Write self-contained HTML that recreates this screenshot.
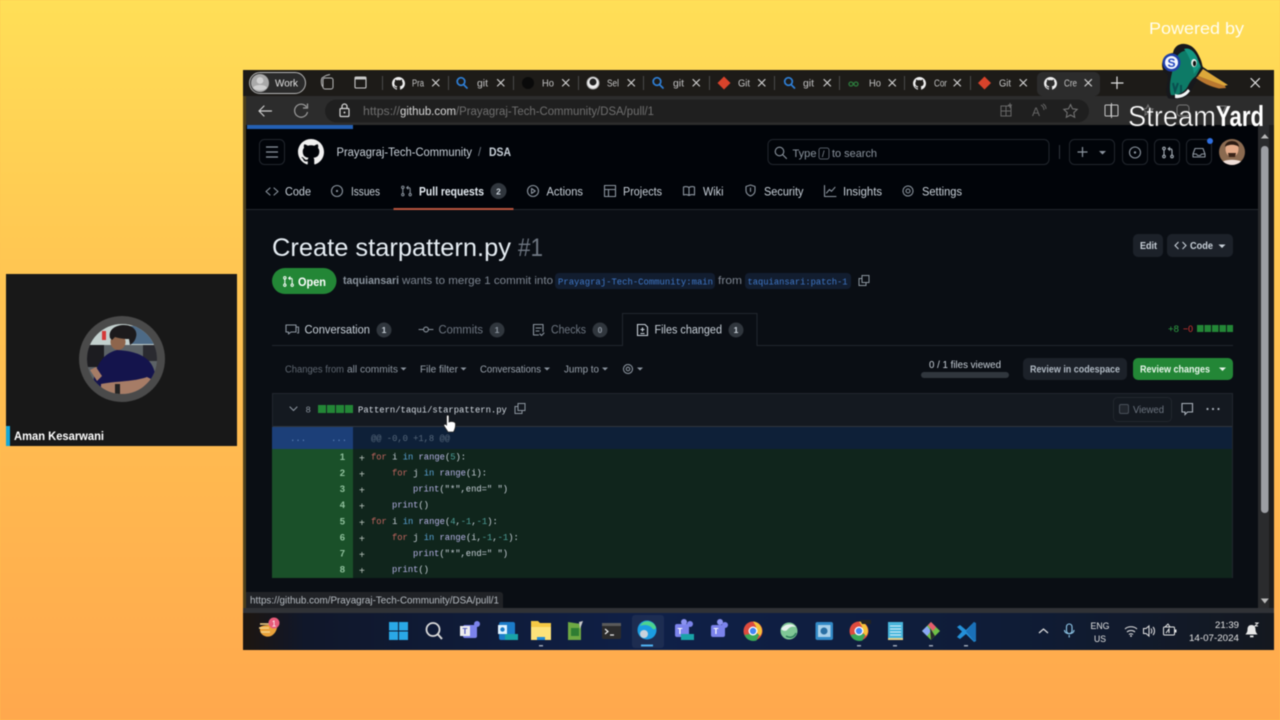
<!DOCTYPE html>
<html lang="en"><head><meta charset="utf-8"><title>Create starpattern.py</title>
<style>
html,body{margin:0;padding:0;width:1280px;height:720px;overflow:hidden;background:#ffc451}
svg{display:block;filter:blur(.55px)}
text{font-family:"Liberation Sans",sans-serif;white-space:pre}
.m{font-family:"Liberation Mono",monospace}
.n{fill:#c9d1d9;font-size:11.5px}
.i{fill:none;stroke:#8b949e;stroke-width:1.1;stroke-linecap:round;stroke-linejoin:round}
.c{font-family:"Liberation Mono",monospace;font-size:8.8px;fill:#c9d1d9}
.k{fill:#c2665f}.b{fill:#5ba3d6}.f{fill:#b7b3e6}.d{fill:#4f9f9a}
.l{font-size:9.5px;fill:#8fc09c;font-weight:bold;text-anchor:end;font-family:"Liberation Mono",monospace}
.p{font-size:10px;fill:#b9c4bd;font-family:"Liberation Mono",monospace}
.t{font-size:10px;fill:#c4c4c4}
.x{stroke:#cfcfcf;stroke-width:1.2;stroke-linecap:round}
.ct{font-size:8.5px;fill:#c9d1d9;text-anchor:middle;font-weight:bold}
</style></head><body>
<svg width="1280" height="720" viewBox="0 0 1280 720" xmlns="http://www.w3.org/2000/svg">
<defs>
<linearGradient id="bg" x1="0" y1="0" x2="0" y2="1"><stop offset="0" stop-color="#ffdf57"/><stop offset=".37" stop-color="#ffc652"/><stop offset="1" stop-color="#ffa84d"/></linearGradient>
<linearGradient id="tb" x1="0" y1="0" x2="1" y2="0"><stop offset="0" stop-color="#1d1610"/><stop offset=".06" stop-color="#10172a"/><stop offset=".4" stop-color="#0f2048"/><stop offset=".75" stop-color="#0f1c36"/><stop offset="1" stop-color="#14181f"/></linearGradient>
<symbol id="gh" viewBox="0 0 16 16"><path d="M8 0c4.42 0 8 3.58 8 8a8.013 8.013 0 0 1-5.45 7.59c-.4.08-.55-.17-.55-.38 0-.27.01-1.13.01-2.2 0-.75-.25-1.23-.54-1.48 1.78-.2 3.65-.88 3.65-3.95 0-.88-.31-1.59-.82-2.15.08-.2.36-1.02-.08-2.12 0 0-.67-.22-2.2.82-.64-.18-1.32-.27-2-.27-.68 0-1.36.09-2 .27-1.53-1.03-2.2-.82-2.2-.82-.44 1.1-.16 1.92-.08 2.12-.51.56-.82 1.28-.82 2.15 0 3.06 1.86 3.75 3.64 3.95-.23.2-.44.55-.51 1.07-.46.21-1.61.55-2.33-.66-.15-.24-.6-.83-1.23-.82-.67.01-.27.38.01.53.34.19.73.9.82 1.13.16.45.68 1.31 2.69.94 0 .67.01 1.3.01 1.49 0 .21-.15.45-.55.38A7.995 7.995 0 0 1 0 8c0-4.42 3.58-8 8-8Z" fill="#f0f0f0"/></symbol>
<symbol id="pr" viewBox="0 0 12 12" overflow="visible"><g fill="none" stroke="currentColor" stroke-width="1.1"><circle cx="2" cy="2" r="1.3"/><circle cx="2" cy="10" r="1.3"/><circle cx="10" cy="10" r="1.3"/><path d="M2 3.4v5.2M10 8.6V4c0-1-.6-1.6-1.6-1.6H6.5M8 .7 6.2 2.4 8 4.1"/></g></symbol>
<symbol id="copy" viewBox="0 0 12 12" overflow="visible"><g fill="none" stroke="#8b949e" stroke-width="1"><path d="M4 1h7v7H4z"/><path d="M4 4H1v7h7V8"/></g></symbol>
<clipPath id="ph"><circle cx="122" cy="359" r="35"/></clipPath>
<clipPath id="av"><circle cx="1232" cy="152" r="13"/></clipPath>
</defs>

<rect width="1280" height="720" fill="url(#bg)"/>
<text x="1149" y="34" font-size="17" fill="#fffdf0" textLength="95" lengthAdjust="spacingAndGlyphs">Powered by</text>

<!-- window -->
<rect x="243" y="70" width="1031" height="580" fill="#0d1117"/>
<rect x="243" y="70" width="1031" height="26" fill="#1d1b18"/>
<rect x="243" y="96" width="1031" height="29" fill="#2c2c2c"/>
<rect x="243" y="96" width="3" height="512" fill="#4c3f1b"/>
<rect x="246" y="125" width="1012" height="84" fill="#010409"/>
<rect x="246" y="209" width="1012" height="399" fill="#0a0e14"/>
<rect x="1037" y="72" width="63" height="24" rx="6" fill="#2c2c2c"/>

<!-- tab strip -->
<rect x="249.500" y="72.500" width="56" height="21" rx="10.500" fill="#2a2a2a" stroke="#b5b5b5"/>
<circle cx="260" cy="83" r="9" fill="#a9a9a9"/><circle cx="260" cy="80.500" r="3.400" fill="#d2d2d2"/><path d="M253 88c1-4 13-4 14 0-3 3-11 3-14 0z" fill="#cfcfcf"/>
<text x="275" y="86.500" font-size="10.500" fill="#e3e3e3" textLength="23" lengthAdjust="spacingAndGlyphs">Work</text>
<g fill="none" stroke="#b8b8b8" stroke-width="1"><rect x="323" y="78" width="10" height="11" rx="2"/><path d="M323 87c-2-2-2-7-1-9l4-2.500M326 75.500l4-1"/></g>
<rect x="355" y="77" width="11" height="11" rx="1" fill="none" stroke="#c8c8c8" stroke-width="1.100"/><rect x="355" y="77" width="11" height="2.500" fill="#c8c8c8"/>
<g stroke="#4a4a4a"><path d="M382.500 76v14M448.500 76v14M513.500 76v14M578.500 76v14M643.500 76v14M709.500 76v14M774.500 76v14M839.500 76v14M904.500 76v14M970.500 76v14"/></g>
<use href="#gh" x="392" y="77" width="13" height="13"/>
<use href="#gh" x="913" y="77" width="13" height="13"/>
<use href="#gh" x="1044" y="77" width="13" height="13"/>
<g fill="none" stroke="#2f7fd6" stroke-width="1.700" stroke-linecap="round"><circle cx="461" cy="81.500" r="3.800"/><path d="M463.500 84.500l3.500 3.500"/><circle cx="657" cy="81.500" r="3.800"/><path d="M659.500 84.500l3.500 3.500"/><circle cx="788.500" cy="81.500" r="3.800"/><path d="M791 84.500l3.500 3.500"/></g>
<circle cx="528" cy="83" r="6" fill="#0a0a0a"/>
<circle cx="593" cy="83" r="6" fill="#eee" stroke="#aaa"/><circle cx="593" cy="82" r="3.500" fill="#222"/>
<g fill="#d8432b"><path d="M724 76.500l6.500 6.500-6.500 6.500-6.500-6.500z"/><path d="M984.500 76.500l6.500 6.500-6.500 6.500-6.500-6.500z"/></g>
<g fill="none" stroke="#2c7a3c" stroke-width="1.300"><circle cx="851" cy="84" r="2"/><circle cx="856" cy="84" r="2"/></g>
<g class="t">
<text x="412" y="86.500" textLength="12" lengthAdjust="spacingAndGlyphs">Pra</text><text x="477" y="86.500" textLength="11" lengthAdjust="spacingAndGlyphs">git</text><text x="542" y="86.500" textLength="12" lengthAdjust="spacingAndGlyphs">Ho</text><text x="607" y="86.500" textLength="12" lengthAdjust="spacingAndGlyphs">Sel</text><text x="673" y="86.500" textLength="11" lengthAdjust="spacingAndGlyphs">git</text><text x="738" y="86.500" textLength="12" lengthAdjust="spacingAndGlyphs">Git</text><text x="803" y="86.500" textLength="11" lengthAdjust="spacingAndGlyphs">git</text><text x="869" y="86.500" textLength="12" lengthAdjust="spacingAndGlyphs">Ho</text><text x="934" y="86.500" textLength="13" lengthAdjust="spacingAndGlyphs">Cor</text><text x="999" y="86.500" textLength="12" lengthAdjust="spacingAndGlyphs">Git</text><text x="1064" y="86.500" textLength="13" lengthAdjust="spacingAndGlyphs">Cre</text>
</g>
<g class="x">
<path d="M432.500 79.500l6.500 6.500M439 79.500l-6.500 6.500M497.500 79.500l6.500 6.500M504 79.500l-6.500 6.500M562.500 79.500l6.500 6.500M569 79.500l-6.500 6.500M628 79.500l6.500 6.500M634.500 79.500l-6.500 6.500M693 79.500l6.500 6.500M699.500 79.500l-6.500 6.500M758.500 79.500l6.500 6.500M765 79.500l-6.500 6.500M824 79.500l6.500 6.500M830.500 79.500l-6.500 6.500M889 79.500l6.500 6.500M895.500 79.500l-6.500 6.500M954 79.500l6.500 6.500M960.500 79.500l-6.500 6.500M1020 79.500l6.500 6.500M1026.500 79.500l-6.500 6.500M1085 79.500l6.500 6.500M1091.500 79.500l-6.500 6.500"/>
<path d="M1117 77v11.500M1111.500 83H1123" stroke="#e0e0e0"/>
<path d="M1251 78.500l8.500 8.500M1259.500 78.500l-8.500 8.500" stroke="#e8e8e8"/>
</g>

<!-- address bar -->
<rect x="325" y="99.500" width="764" height="23" rx="11.500" fill="#1f1f1f"/>
<path d="M259 111h12.500M259 111l5-5M259 111l5 5" fill="none" stroke="#cdcdcd" stroke-width="1.200" stroke-linecap="round"/>
<path d="M306.500 107a6.500 6.500 0 1 0 1 5" fill="none" stroke="#9d9d9d" stroke-width="1.200"/><path d="M307.500 103.500v4.500h-4.500" fill="none" stroke="#9d9d9d" stroke-width="1.200"/>
<rect x="340" y="108.500" width="9" height="8" rx="1" fill="none" stroke="#d5d5d5" stroke-width="1.200"/><path d="M342 108.500v-2a2.500 2.500 0 0 1 5 0v2" fill="none" stroke="#d5d5d5" stroke-width="1.200"/><circle cx="344.500" cy="112.500" r="1" fill="#d5d5d5"/>
<text x="363" y="115" font-size="11.500" fill="#6f6f6f" textLength="37" lengthAdjust="spacingAndGlyphs">https://</text>
<text x="400" y="115" font-size="11.500" fill="#d9d9d9" textLength="56" lengthAdjust="spacingAndGlyphs">github.com</text>
<text x="456" y="115" font-size="11.500" fill="#6f6f6f" textLength="198" lengthAdjust="spacingAndGlyphs">/Prayagraj-Tech-Community/DSA/pull/1</text>
<g fill="none" stroke="#666" stroke-width="1"><path d="M1001 106h10v10h-10zM1006 106v10M1001 111h10M1010 103v5M1008 105h4"/></g>
<text x="1032" y="116" font-size="12" fill="#666">A</text><path d="M1041 105c2 1 3 3 3 5M1043 104c2 1 3 3 3 5" stroke="#666" fill="none"/>
<path d="M1070.500 104.500l2 4.300 4.700.6-3.400 3.200.9 4.700-4.200-2.300-4.200 2.300.9-4.700-3.400-3.200 4.700-.6z" fill="none" stroke="#777"/>
<path d="M1106 105h5v11h-5a1 1 0 0 1-1-1v-9a1 1 0 0 1 1-1zM1112 105h5a1 1 0 0 1 1 1v9a1 1 0 0 1-1 1h-5M1111.500 103v15" fill="none" stroke="#c5c5c5"/>
<g fill="none" stroke="#777"><path d="M1148 105l1.500 3.500 3.500.5-2.500 2.500.5 3.500-3-1.800-3 1.800.5-3.500-2.500-2.500 3.500-.5z"/><rect x="1177" y="105" width="12" height="11" rx="3"/><path d="M1218 106l8 0-4 8z"/></g>
<rect x="247" y="125" width="106" height="4" fill="#2460b3"/>

<!-- github header -->
<rect x="259.500" y="139.500" width="25" height="25" rx="5" fill="none" stroke="#21262d"/>
<path d="M266 147h12M266 152h12M266 157h12" stroke="#8b949e" stroke-width="1.200"/>
<use href="#gh" x="298" y="139" width="26" height="26"/>
<text x="336.500" y="156" class="n" textLength="135.500" lengthAdjust="spacingAndGlyphs">Prayagraj-Tech-Community</text>
<text x="478" y="156" font-size="11.500" fill="#6e7681">/</text>
<text x="489" y="156" font-size="11.500" font-weight="bold" fill="#c9d1d9" textLength="22" lengthAdjust="spacingAndGlyphs">DSA</text>
<rect x="768" y="139.500" width="281" height="25" rx="5" fill="none" stroke="#21262d"/>
<circle cx="779.500" cy="151.500" r="4.300" class="i"/><path d="M783 155l3.500 3.500" class="i"/>
<text x="792.500" y="157" font-size="11" fill="#8b949e" textLength="24" lengthAdjust="spacingAndGlyphs">Type</text>
<rect x="819" y="148" width="10" height="11" rx="2" fill="none" stroke="#6e7681" stroke-width=".8"/><text x="822" y="157" font-size="9" fill="#8b949e">/</text>
<text x="832" y="157" font-size="11" fill="#8b949e" textLength="45" lengthAdjust="spacingAndGlyphs">to search</text>
<path d="M1059.500 145v14" stroke="#30363d"/>
<g fill="none" stroke="#21262d"><rect x="1069.500" y="139.500" width="45" height="25" rx="5"/><rect x="1122.500" y="139.500" width="25" height="25" rx="5"/><rect x="1154.500" y="139.500" width="25" height="25" rx="5"/><rect x="1186.500" y="139.500" width="25" height="25" rx="5"/></g>
<path d="M1082.500 147v10M1077.500 152h10" stroke="#8b949e" stroke-width="1.200"/><path d="M1099 151h7l-3.500 3.500z" fill="#8b949e"/>
<circle cx="1135" cy="152.500" r="5.500" class="i"/><circle cx="1135" cy="152.500" r="1.200" fill="#8b949e"/>
<use href="#pr" x="1162" y="146.500" width="12" height="12" color="#a5adb5"/>
<path d="M1193 154l2-5.500h8l2 5.500v3h-12zM1193 154h3.500l1 1.500h3l1-1.500h3.500" class="i"/>
<circle cx="1210" cy="141" r="3" fill="#2f6fe0"/>
<g clip-path="url(#av)"><rect x="1219" y="139" width="26" height="26" fill="#8a6a50"/><ellipse cx="1232" cy="149" rx="6.500" ry="8" fill="#e5ac8a"/><path d="M1225 147c0-8 14-8 14 0-3-3-11-3-14 0z" fill="#2a1a12"/><path d="M1228 153h8l-1 4h-6z" fill="#3a2418"/><path d="M1219 165c2-7 24-7 26 0z" fill="#eeded8"/></g>

<!-- repo nav -->
<path d="M270 188l-4 3.500 4 3.500M274 188l4 3.500-4 3.500" class="i"/>
<g font-size="11.500" fill="#c9d1d9">
<text x="285" y="195.500" textLength="26" lengthAdjust="spacingAndGlyphs">Code</text><text x="351" y="195.500" textLength="29" lengthAdjust="spacingAndGlyphs">Issues</text>
<text x="546.500" y="195.500" textLength="36.500" lengthAdjust="spacingAndGlyphs">Actions</text><text x="623" y="195.500" textLength="39" lengthAdjust="spacingAndGlyphs">Projects</text><text x="703" y="195.500" textLength="20.500" lengthAdjust="spacingAndGlyphs">Wiki</text><text x="764" y="195.500" textLength="39.500" lengthAdjust="spacingAndGlyphs">Security</text><text x="843" y="195.500" textLength="39" lengthAdjust="spacingAndGlyphs">Insights</text><text x="922" y="195.500" textLength="40" lengthAdjust="spacingAndGlyphs">Settings</text>
</g>
<circle cx="337" cy="191" r="5.500" class="i"/><circle cx="337" cy="191" r="1.100" fill="#8b949e"/>
<use href="#pr" x="401" y="185.500" width="11" height="11" color="#8b949e"/>
<text x="419" y="195.500" font-size="11.500" font-weight="bold" fill="#e6edf3" textLength="65" lengthAdjust="spacingAndGlyphs">Pull requests</text>
<circle cx="498.500" cy="191" r="8" fill="#30363d"/><text x="498.500" y="194.500" class="ct">2</text>
<circle cx="533" cy="191" r="5.500" class="i"/><path d="M531.500 188.500v5l3.800-2.500z" class="i"/>
<path d="M604.500 185.500h11v11h-11zM604.500 189.500h11M608.500 189.500v7" class="i"/>
<path d="M689 187.500c-1.500-1-4-1-5.500-.5v8c1.500-.5 4-.5 5.500.5 1.500-1 4-1 5.500-.5v-8c-1.500-.5-4-.5-5.500.5zM689 187.500v8" class="i"/>
<path d="M750.500 185l4.500 1.500v4c0 3-2 4.500-4.500 5.500-2.500-1-4.500-2.500-4.500-5.500v-4zM750.500 188v3.500" class="i"/>
<path d="M824.500 185.500v11h11.500M826.500 193l3-3.500 2 1.800 3.500-4" class="i"/>
<circle cx="908" cy="191" r="2" class="i"/><circle cx="908" cy="191" r="5" class="i" stroke-dasharray="2 .8" stroke-width="1.600" stroke-linecap="butt"/>
<rect x="246" y="209" width="1012" height="1" fill="#21262d"/>
<rect x="393.500" y="208" width="120" height="2" fill="#b8543e"/>

<!-- title -->
<text x="272" y="256" font-size="25" fill="#e6edf3" textLength="239" lengthAdjust="spacingAndGlyphs">Create starpattern.py</text>
<text x="518" y="256" font-size="25" fill="#6e7681" textLength="25" lengthAdjust="spacingAndGlyphs">#1</text>
<rect x="1133" y="234" width="30" height="23" rx="5" fill="#1c2129"/><text x="1140" y="249" font-size="10" font-weight="bold" fill="#c9d1d9" textLength="17" lengthAdjust="spacingAndGlyphs">Edit</text>
<rect x="1167" y="234" width="66" height="23" rx="5" fill="#1c2129"/>
<path d="M1178.500 242l-3.500 3.500 3.500 3.500M1182.500 242l3.500 3.500-3.500 3.500" fill="none" stroke="#c9d1d9" stroke-width="1.100"/>
<text x="1190" y="249" font-size="10" font-weight="bold" fill="#c9d1d9" textLength="23" lengthAdjust="spacingAndGlyphs">Code</text>
<path d="M1218.500 244.500h7l-3.500 3.500z" fill="#c9d1d9"/>

<rect x="272" y="268" width="64.500" height="26" rx="13" fill="#238636"/>
<use href="#pr" x="283" y="276" width="11" height="11" color="#fff"/>
<text x="298" y="286" font-size="12" font-weight="bold" fill="#fff" textLength="28" lengthAdjust="spacingAndGlyphs">Open</text>
<text x="343" y="284" font-size="11" font-weight="bold" fill="#8b949e" textLength="56" lengthAdjust="spacingAndGlyphs">taquiansari</text>
<text x="402" y="284" font-size="11" fill="#7d8590" textLength="151" lengthAdjust="spacingAndGlyphs">wants to merge 1 commit into</text>
<rect x="555" y="273" width="160" height="16" rx="4" fill="#121d2f"/>
<text x="558" y="284.500" class="m" font-size="9" fill="#3f78c9" textLength="155" lengthAdjust="spacingAndGlyphs">Prayagraj-Tech-Community:main</text>
<text x="718" y="284" font-size="11" fill="#7d8590" textLength="24" lengthAdjust="spacingAndGlyphs">from</text>
<rect x="745" y="273" width="106" height="16" rx="4" fill="#121d2f"/>
<text x="747.500" y="284.500" class="m" font-size="9" fill="#3f78c9" textLength="100" lengthAdjust="spacingAndGlyphs">taquiansari:patch-1</text>
<use href="#copy" x="858" y="274.500" width="12" height="12"/>

<!-- tabs -->
<path d="M272 345.500H622.500V313.500H757V345.500H1233" fill="none" stroke="#21262d"/>
<rect x="623" y="345" width="133.500" height="1.500" fill="#0a0e14"/>
<path d="M286 325h10v7h-5l-2.500 2v-2H286zM296.500 327h2v6h-1" class="i"/>
<text x="304.500" y="333.500" font-size="11.500" fill="#c9d1d9" textLength="65.500" lengthAdjust="spacingAndGlyphs">Conversation</text>
<circle cx="384" cy="330" r="7.500" fill="#30363d"/><text x="384" y="333" class="ct">1</text>
<path d="M419 329.500h4.500M428.500 329.500h4.500" class="i"/><circle cx="426" cy="329.500" r="2.400" class="i"/>
<text x="438.500" y="333.500" font-size="11.500" fill="#6e7681" textLength="44.500" lengthAdjust="spacingAndGlyphs">Commits</text>
<circle cx="497" cy="330" r="7.500" fill="#30363d"/><text x="497" y="333" class="ct" style="fill:#8b949e">1</text>
<path d="M533.500 324.500h9.500v7M533.500 324.500v10.500h5M536 328h5M536 331h3M540 334l1.500 1.500 2.500-2.500" class="i"/>
<text x="551" y="333.500" font-size="11.500" fill="#6e7681" textLength="35" lengthAdjust="spacingAndGlyphs">Checks</text>
<circle cx="600" cy="330" r="7.500" fill="#30363d"/><text x="600" y="333" class="ct" style="fill:#8b949e">0</text>
<path d="M637.500 324.500h7.500l2.500 2.500v8.500h-10zM642.500 327.500v4M640.500 329.500h4M640.500 333.500h4" fill="none" stroke="#c9d1d9" stroke-width="1.100"/>
<text x="654.500" y="333.500" font-size="11.500" fill="#c9d1d9" textLength="67.500" lengthAdjust="spacingAndGlyphs">Files changed</text>
<circle cx="736" cy="330" r="7.500" fill="#30363d"/><text x="736" y="333" class="ct">1</text>
<text x="1168" y="332" font-size="9.500" fill="#2ea043" textLength="11" lengthAdjust="spacingAndGlyphs">+8</text>
<text x="1183" y="332" font-size="9.500" fill="#da3633" textLength="10" lengthAdjust="spacingAndGlyphs">−0</text>
<g fill="#238636"><rect x="1197" y="325" width="6.500" height="7"/><rect x="1204.500" y="325" width="6.500" height="7"/><rect x="1212" y="325" width="6.500" height="7"/><rect x="1219.500" y="325" width="6.500" height="7"/><rect x="1227" y="325" width="6" height="7"/></g>

<!-- filter bar -->
<g font-size="10">
<text x="285" y="372.500" fill="#5f6771" textLength="59" lengthAdjust="spacingAndGlyphs">Changes from</text>
<text x="347" y="372.500" fill="#8b949e" textLength="51" lengthAdjust="spacingAndGlyphs">all commits</text>
<text x="420" y="372.500" fill="#9aa3ad" textLength="38" lengthAdjust="spacingAndGlyphs">File filter</text>
<text x="480" y="372.500" fill="#9aa3ad" textLength="61" lengthAdjust="spacingAndGlyphs">Conversations</text>
<text x="564" y="372.500" fill="#9aa3ad" textLength="35" lengthAdjust="spacingAndGlyphs">Jump to</text>
<text x="929" y="368" fill="#c9d1d9" textLength="72" lengthAdjust="spacingAndGlyphs">0 / 1 files viewed</text>
</g>
<g fill="#8b949e"><path d="M400.500 367.500h6l-3 3zM460.500 367.500h6l-3 3zM544 367.500h6l-3 3zM602 367.500h6l-3 3zM637 367.500h6l-3 3z"/></g>
<circle cx="628" cy="369" r="1.800" class="i"/><circle cx="628" cy="369" r="4.500" class="i" stroke-dasharray="2 .7" stroke-width="1.500" stroke-linecap="butt"/>
<rect x="921" y="372" width="88" height="6" rx="3" fill="#30363d"/>
<rect x="1023" y="358" width="104" height="22" rx="5" fill="#1c2129"/>
<text x="1030" y="372.500" font-size="10" font-weight="bold" fill="#b1bac4" textLength="90" lengthAdjust="spacingAndGlyphs">Review in codespace</text>
<rect x="1133" y="358" width="100" height="22" rx="5" fill="#238636"/>
<text x="1140" y="372.500" font-size="10" font-weight="bold" fill="#e8f5ea" textLength="70" lengthAdjust="spacingAndGlyphs">Review changes</text>
<path d="M1219 367.500h7l-3.500 3.500z" fill="#e8f5ea"/>

<!-- diff box -->
<rect x="272.500" y="393.500" width="960" height="184" fill="#141920" stroke="#21262d"/>
<path d="M290 407l3.500 3.500 3.500-3.500" class="i"/>
<text x="305.500" y="412.500" class="m" font-size="9" fill="#8b949e">8</text>
<g fill="#238636"><rect x="318" y="405" width="8" height="8"/><rect x="327" y="405" width="8" height="8"/><rect x="336" y="405" width="8" height="8"/><rect x="345" y="405" width="8" height="8"/></g>
<text x="358" y="412.500" class="m" font-size="8.870" fill="#d5dce3">Pattern/taqui/starpattern.py</text>
<use href="#copy" x="514" y="402.500" width="12" height="12"/>
<rect x="1113.500" y="397.500" width="58" height="24" rx="4" fill="none" stroke="#21262d"/>
<rect x="1119.500" y="404.500" width="9" height="9" rx="1.500" fill="#21262d" stroke="#484f58"/>
<text x="1133" y="413" font-size="10" fill="#6e7681" textLength="31" lengthAdjust="spacingAndGlyphs">Viewed</text>
<path d="M1182 403.500h10.500v8.500h-5l-2.500 2.500v-2.500h-3z" fill="none" stroke="#a9b1ba" stroke-width="1.100"/>
<g fill="#a9b1ba"><circle cx="1207.500" cy="409" r="1.100"/><circle cx="1213" cy="409" r="1.100"/><circle cx="1218.500" cy="409" r="1.100"/></g>
<rect x="273" y="426" width="959" height="1" fill="#30363d"/>

<rect x="272" y="427" width="81" height="22" fill="#1c3f78"/>
<rect x="353" y="427" width="879" height="22" fill="#0e2038"/>
<rect x="272" y="449" width="81" height="129" fill="#1a5029"/>
<rect x="353" y="449" width="879" height="129" fill="#10251c"/>
<text x="290" y="441" class="m" font-size="9" fill="#5d83b8">...</text><text x="331" y="441" class="m" font-size="9" fill="#5d83b8">...</text>
<text x="371" y="441" class="c" style="fill:#56677a" textLength="79" lengthAdjust="spacingAndGlyphs">@@ -0,0 +1,8 @@</text>

<g class="l"><text x="345" y="460">1</text><text x="345" y="476">2</text><text x="345" y="492">3</text><text x="345" y="508">4</text><text x="345" y="524.500">5</text><text x="345" y="540.500">6</text><text x="345" y="556.500">7</text><text x="345" y="572.500">8</text></g>
<g class="p"><text x="359" y="461.500">+</text><text x="359" y="477.500">+</text><text x="359" y="493.500">+</text><text x="359" y="509.500">+</text><text x="359" y="526">+</text><text x="359" y="542">+</text><text x="359" y="558">+</text><text x="359" y="574">+</text></g>

<text class="c" x="371" y="459.500"><tspan class="k">for</tspan> i <tspan class="b">in</tspan> <tspan class="f">range</tspan>(<tspan class="d">5</tspan>):</text>
<text class="c" x="392" y="475.500"><tspan class="k">for</tspan> j <tspan class="b">in</tspan> <tspan class="f">range</tspan>(i):</text>
<text class="c" x="413" y="491.500"><tspan class="f">print</tspan>("*",end=" ")</text>
<text class="c" x="392" y="507.500"><tspan class="f">print</tspan>()</text>
<text class="c" x="371" y="524"><tspan class="k">for</tspan> i <tspan class="b">in</tspan> <tspan class="f">range</tspan>(<tspan class="d">4</tspan>,<tspan class="d">-1</tspan>,<tspan class="d">-1</tspan>):</text>
<text class="c" x="392" y="540"><tspan class="k">for</tspan> j <tspan class="b">in</tspan> <tspan class="f">range</tspan>(i,<tspan class="d">-1</tspan>,<tspan class="d">-1</tspan>):</text>
<text class="c" x="413" y="556"><tspan class="f">print</tspan>("*",end=" ")</text>
<text class="c" x="392" y="572"><tspan class="f">print</tspan>()</text>

<!-- cursor -->
<path d="M446.500 416.500c0-2 2.500-2 2.500 0v5.500c2-1 6-.5 6.500 1.500.3 3-.5 6-2 8.500h-5.500l-4-6c-.7-1.500 1-2.500 2.500-1z" fill="#fff" stroke="#222" stroke-width=".8"/>

<!-- status bubble -->
<path d="M246 592h254a3 3 0 0 1 3 3v13H246z" fill="#202226"/>
<text x="250" y="603.500" font-size="10" fill="#b6bcc2" textLength="249" lengthAdjust="spacingAndGlyphs">https://github.com/Prayagraj-Tech-Community/DSA/pull/1</text>

<!-- scrollbar -->
<rect x="1258" y="125" width="15" height="483" fill="#2a2b2d"/>
<rect x="1269" y="125" width="5" height="483" fill="#1d1d1d"/>
<rect x="1261" y="146" width="7.500" height="367" rx="3.500" fill="#9c9ea3"/>
<path d="M1264.800 134l4 4.500h-8zM1264.800 603.500l-4-5h8z" fill="#b8b8b8"/>

<!-- taskbar -->
<rect x="243" y="608" width="1031" height="5" fill="#303236"/>
<rect x="243" y="613" width="1031" height="37" fill="url(#tb)"/>
<path d="M260 627c3-2 8-2 12-2l5-4c1 5 0 12-6 15-5 2-10-1-11-5z" fill="#e9a23b"/><path d="M260 624h9M259 628h10M261 632h9" stroke="#f5d28a" stroke-width="1.500"/>
<circle cx="274" cy="623" r="5.500" fill="#e85b7a"/><text x="274" y="626.500" font-size="8" fill="#fff" text-anchor="middle">1</text>
<g fill="#2aa8e6"><rect x="389" y="622" width="9" height="8.500"/><rect x="399" y="622" width="9" height="8.500"/><rect x="389" y="631.500" width="9" height="8.500"/><rect x="399" y="631.500" width="9" height="8.500"/></g>
<circle cx="433" cy="629.500" r="6.500" fill="none" stroke="#d9d9d9" stroke-width="1.800"/><path d="M438 634.500l4 4.500" stroke="#d9d9d9" stroke-width="2"/>
<rect x="463" y="625" width="14" height="13" rx="2" fill="#7b83eb"/><rect x="460" y="626" width="10" height="10" fill="#eee"/><circle cx="477" cy="624" r="3" fill="#7b83eb"/><text x="465" y="634" font-size="8" fill="#4b53bc" text-anchor="middle" font-weight="bold">T</text>
<rect x="499" y="622" width="16" height="18" rx="2" fill="#1c7cc9"/><rect x="498" y="625" width="9" height="9" fill="#dff2ff"/><rect x="505" y="634" width="13" height="6" fill="#19a3a8"/><circle cx="502.500" cy="629.500" r="2.200" fill="#1c7cc9"/>
<path d="M531 625v-4h7l2 2h11v17h-20z" fill="#f6c945"/><rect x="531" y="627" width="20" height="13" fill="#fde27a"/><rect x="537" y="637" width="8" height="3" fill="#1f8ad8"/><rect x="539" y="645" width="4" height="1.500" fill="#9aa4b4"/>
<path d="M568 622l13 2v16h-13z" fill="#6ea843"/><rect x="571" y="628" width="8" height="8" fill="#2f7d32"/><path d="M579 622l4-1-3 8z" fill="#c9c9c9"/>
<rect x="602" y="623" width="19" height="16" rx="1.500" fill="#2b2b2b"/><rect x="602" y="623" width="19" height="3" fill="#5a5a5a"/><path d="M605 629l3 2.500-3 2.500M610 635h4" fill="none" stroke="#e8e8e8" stroke-width="1.200"/>
<rect x="632" y="615" width="32" height="33" rx="3" fill="#fff" opacity=".06"/>
<circle cx="647" cy="630" r="9.500" fill="#1b9de2"/><path d="M640 626c3-7 13-6 16 1 0 3-3 3-4 1-2-3-8-4-12-2z" fill="#4dd38f"/><circle cx="644" cy="634" r="4" fill="#c8d3dc"/><rect x="641" y="644.500" width="12" height="2" fill="#4fb0f0"/>
<rect x="675" y="624" width="14" height="13" rx="2" fill="#7b83eb"/><circle cx="690" cy="624" r="3" fill="#7b83eb"/><circle cx="684" cy="622" r="3" fill="#8b93f0"/><text x="680" y="634" font-size="8" fill="#fff" font-weight="bold" text-anchor="middle">T</text><rect x="681" y="634" width="13" height="6" fill="#19a3a8"/>
<rect x="711" y="625" width="14" height="12" rx="2" fill="#7b83eb"/><circle cx="725" cy="625" r="3" fill="#7b83eb"/><circle cx="720" cy="622" r="3" fill="#8b93f0"/><text x="716" y="634" font-size="8" fill="#fff" font-weight="bold" text-anchor="middle">T</text>
<circle cx="753" cy="631" r="9.500" fill="#dd4b3e"/><path d="M744.500 635a9.500 9.500 0 0 0 12 5.500l3-6.500h-10z" fill="#3aa757"/><path d="M753 621.500a9.500 9.500 0 0 1 9 9.500c0 2-1 4-2 5l-4-4.500v-5z" fill="#f6c33b"/><circle cx="753" cy="631" r="4.500" fill="#fff"/><circle cx="753" cy="631" r="3.200" fill="#4285f4"/>
<circle cx="789" cy="631" r="8.500" fill="#7fc795"/><path d="M781 629c4-6 12-6 15-2-4-1-6 0-8 2-2 3-5 2-7 0z" fill="#e8f3ee"/><path d="M786 636c3 2 8 2 10-3" stroke="#2d7d5a" fill="none" stroke-width="1.500"/>
<rect x="815.500" y="622" width="17.500" height="18" rx="2" fill="#3289c6"/><rect x="818" y="625" width="12.500" height="12" fill="#a9d0ea"/><circle cx="824" cy="631" r="3.500" fill="#2a6fa3"/>
<circle cx="859" cy="631" r="9.500" fill="#dd4b3e"/><path d="M850.500 635a9.500 9.500 0 0 0 12 5.500l3-6.500h-10z" fill="#3aa757"/><path d="M859 621.500a9.500 9.500 0 0 1 9 9.500c0 2-1 4-2 5l-4-4.500v-5z" fill="#f6c33b"/><circle cx="859" cy="631" r="4.500" fill="#fff"/><circle cx="859" cy="631" r="3.200" fill="#4285f4"/><path d="M860 620h11v4h-9z" fill="#232323"/>
<rect x="888" y="622" width="15" height="18" fill="#49b6dc"/><path d="M890 626h11M890 629h11M890 632h11M890 635h11" stroke="#d9f1f9"/><rect x="888" y="638" width="15" height="2" fill="#e6d18a"/>
<path d="M931 622l9 9-9 9-9-9z" fill="#6fbf47"/><path d="M922 631l5-5 4 5-4 5z" fill="#89a8f5"/><path d="M931 622l-3 3 5 6 3-4z" fill="#e45d6e"/><path d="M930 628l5 8-4 4z" fill="#2a2a2a"/>
<path d="M957 627l3-2 6 5 8-8 2 2v17l-2 1-8-8-6 5-3-2 5-5.500z" fill="#2490d8"/><path d="M974 622l2 1v17l-2 1-8-9.500z" fill="#1a70b8"/>
<g fill="#9aa4b4"><rect x="857" y="645" width="4" height="1.500"/><rect x="893" y="645" width="4" height="1.500"/><rect x="929" y="645" width="4" height="1.500"/><rect x="964" y="645" width="4" height="1.500"/></g>

<path d="M1039 633l4.500-4 4.500 4" fill="none" stroke="#e0e0e0" stroke-width="1.200"/>
<rect x="1066.500" y="624" width="5.500" height="9.500" rx="2.700" fill="none" stroke="#8fc7e8" stroke-width="1.100"/><path d="M1064.500 630c0 5 9.500 5 9.500 0M1069.200 635v2.500" fill="none" stroke="#8fc7e8" stroke-width="1.100"/>
<text x="1100" y="629" font-size="9.500" fill="#e4e4e4" text-anchor="middle" textLength="19" lengthAdjust="spacingAndGlyphs">ENG</text>
<text x="1100" y="642" font-size="9.500" fill="#e4e4e4" text-anchor="middle" textLength="12" lengthAdjust="spacingAndGlyphs">US</text>
<path d="M1125 629c3-3 9-3 12 0M1127 632c2-2 6-2 8 0M1129 634.500c1-1 3-1 4 0" fill="none" stroke="#e4e4e4" stroke-width="1"/><circle cx="1131" cy="636" r=".9" fill="#e4e4e4"/>
<path d="M1143.500 628.500h2.500l3-2.500v10l-3-2.500h-2.500zM1151 628.500c1 1.500 1 3.500 0 5M1153 627c2 2 2 6 0 8" fill="none" stroke="#e4e4e4"/>
<rect x="1163.500" y="627" width="11" height="8" rx="1" fill="none" stroke="#e4e4e4"/><rect x="1175" y="629.500" width="1.500" height="3" fill="#e4e4e4"/><path d="M1165 627l3-3 2 3M1166 633l3-4v4" stroke="#e4e4e4" fill="none"/>
<text x="1239" y="628" font-size="9.500" fill="#e4e4e4" text-anchor="end" textLength="24" lengthAdjust="spacingAndGlyphs">21:39</text>
<text x="1239" y="641" font-size="9.500" fill="#e4e4e4" text-anchor="end" textLength="50" lengthAdjust="spacingAndGlyphs">14-07-2024</text>
<path d="M1251.500 625c-3 0-4 2-4 4.500 0 3-1.500 4-2 5h12c-.5-1-2-2-2-5 0-2.500-1-4.500-4-4.500z" fill="#e8e8e8"/><rect x="1250" y="635.500" width="3.500" height="1.800" fill="#e8e8e8"/><path d="M1255 623h3l-3 3h3" stroke="#e8e8e8" fill="none"/>

<!-- webcam tile -->
<rect x="6" y="274" width="231" height="172" fill="#181818"/>
<rect x="6" y="426" width="4" height="20" fill="#16a8d8"/>
<text x="14" y="440" font-size="12" font-weight="bold" fill="#fff" textLength="90" lengthAdjust="spacingAndGlyphs">Aman Kesarwani</text>
<circle cx="122" cy="359" r="43" fill="#4a4a4a"/>
<g clip-path="url(#ph)">
<rect x="87" y="324" width="70" height="70" fill="#5c6266"/>
<rect x="87" y="324" width="70" height="21" fill="#c3d0ce"/>
<rect x="130" y="326" width="27" height="18" fill="#4d6a86"/>
<rect x="102" y="331" width="4" height="9" fill="#d43a3a"/>
<rect x="87" y="345" width="17" height="22" fill="#1c1c20"/>
<rect x="143" y="345" width="14" height="16" fill="#2a2a30"/>
<path d="M93 384c2-16 8-30 24-34 16 1 35 5 38 24l-3 12-56 2z" fill="#14144c"/>
<ellipse cx="118" cy="342" rx="7.500" ry="8" fill="#8e654c"/>
<path d="M110 338c-2-8 5-13 14-13 8 0 14 5 12 12-1 4-3 6-6 8l-1-6c-6 0-11-1-14-2l-3 3z" fill="#1c1a1c"/>
<path d="M90 370l6-3 6 9-5 5zM101 384c14-3 32-2 46-7l6 3-4 14h-48z" fill="#a67c66"/>
<rect x="115" y="384" width="5" height="10" fill="#222"/>
</g>

<!-- StreamYard logo -->
<path d="M1168 98c-2-3-2-9-1-14 1-4 1-7 0-10-5-3-6-9-4-14 2-4 6-7 10-7 1-7 7-10 12-9 8 1 12 7 15 14 2 4 2 7 3 9l26 17-2 3-12-1c-7 0-13-4-18-6-2 3-3 5-5 9-2 6-8 10-14 10-4 0-8 0-10-1z" fill="#17181c"/>
<path d="M1171 95c-2-5-1-15 1-22 1-8 2-15 8-20 4-3 10-4 14 0 3 4 5 9 7 14l-5 9c-4 3-6 6-8 10-3 6-10 10-17 9z" fill="#0d7a66"/>
<path d="M1184 49c5-2 10 2 13 8l3 9c-2 3-4 5-6 8-1-8-5-19-10-25z" fill="#149580"/>
<path d="M1173 83l2 8 3-8M1181 85v8" stroke="#0a4f50" stroke-width="2" fill="none"/>
<path d="M1175 94c5 2 10-1 13-5l2 2c-3 5-10 8-15 7z" fill="#f2f6f6"/>
<circle cx="1171.500" cy="62.500" r="9" fill="#1f3fa8"/><circle cx="1171.500" cy="62.500" r="6.500" fill="#f4f7ff"/>
<text x="1171.500" y="67" font-size="12" font-weight="bold" fill="#2347c0" text-anchor="middle">S</text>
<ellipse cx="1194" cy="63" rx="2.800" ry="4" fill="#f0f5f0"/><ellipse cx="1194.500" cy="63.500" rx="1.600" ry="2.800" fill="#111"/>
<path d="M1198 76l5-7 25 16-4 1z" fill="#dda83a"/>
<path d="M1196 78l2-2 27 10 1 2-7 .5c-9-2-17-6-23-10.500z" fill="#b9772f"/>
<text x="1128" y="126" font-size="29" fill="#fff" stroke="#3a3a3a" stroke-width=".5" textLength="88" lengthAdjust="spacingAndGlyphs">Stream</text>
<text x="1216" y="126" font-size="29" font-weight="bold" fill="#fff" textLength="48" lengthAdjust="spacingAndGlyphs">Yard</text>
</svg>
</body></html>
